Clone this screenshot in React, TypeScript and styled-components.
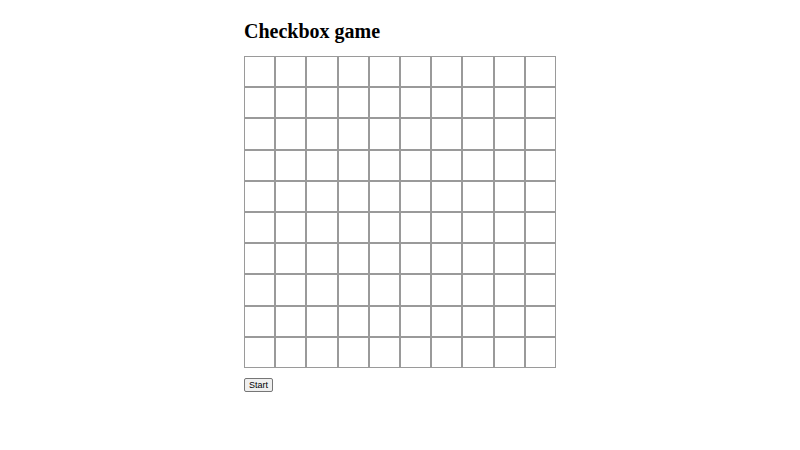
import React, { useState } from "react";
import styled, { createGlobalStyle } from "styled-components";

const GlobalStyle = createGlobalStyle`
  html, body {
    margin: 0;
    padding: 0;
    background: #ffffff;
  }
  body {
    font-family: "Liberation Serif", "Times New Roman", serif;
    color: #000;
  }
`;

const Page = styled.main`
  width: 312px;
  margin: 0 auto;
  padding-top: 20px;
`;

const Title = styled.h1`
  margin: 0 0 13px;
  font-family: "Liberation Serif", "Times New Roman", serif;
  font-size: 20px;
  font-weight: bold;
  line-height: 23px;
`;

const Board = styled.div`
  display: grid;
  grid-template-columns: repeat(10, 1fr);
  width: 312px;
`;

const Cell = styled.button<{ $on: boolean }>`
  box-sizing: border-box;
  aspect-ratio: 1 / 1;
  width: 100%;
  margin: 0;
  padding: 0;
  border: 1px solid #9a9a9a;
  background: ${(p) => (p.$on ? "#333" : "#ffffff")};
  cursor: pointer;
`;

const StartButton = styled.button`
  display: block;
  margin-top: 10px;
  padding: 1px 4px;
  font-family: "Liberation Sans", Arial, sans-serif;
  font-size: 9px;
  line-height: 10px;
  color: #000;
  background: #efefef;
  border: 1px solid #767676;
  border-radius: 2px;
`;

export default function App() {
  const [cells, setCells] = useState<boolean[]>(() => Array(100).fill(false));

  const toggle = (i: number) =>
    setCells((prev) => prev.map((v, j) => (j === i ? !v : v)));

  return (
    <>
      <GlobalStyle />
      <Page>
        <Title>Checkbox game</Title>
        <Board>
          {cells.map((on, i) => (
            <Cell key={i} $on={on} onClick={() => toggle(i)} aria-label={`cell ${i + 1}`} />
          ))}
        </Board>
        <StartButton>Start</StartButton>
      </Page>
    </>
  );
}
